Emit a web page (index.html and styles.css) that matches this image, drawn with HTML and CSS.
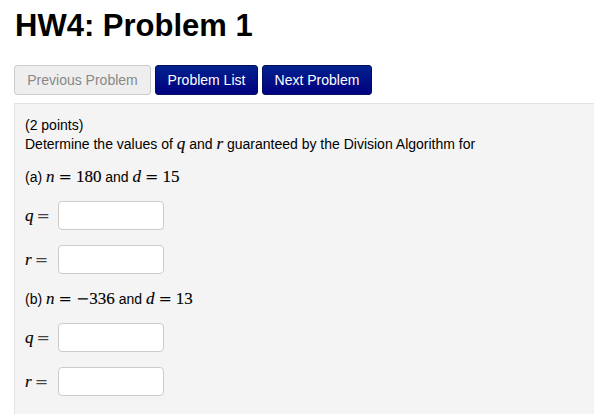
FILE: index.html
```html
<!DOCTYPE html>
<html lang="en">
<head>
    <meta charset="utf-8" />
    <title>HW4: Problem 1</title>
    <link rel="stylesheet" href="styles.css">
</head>
<body>
    <h1 class="page-title">HW4: Problem 1</h1>
    <div class="nav-btns">
        <a href="javascript:void(0)" class="btn btn-disabled">Previous Problem</a>
        <a href="javascript:void(0)" class="btn btn-primary">Problem List</a>
        <a href="javascript:void(0)" class="btn btn-primary">Next Problem</a>
    </div>
    <div class="problem">
        <p class="points">(2 points)</p>
        <p class="intro">Determine the values of <i class="m">q</i> and <i class="m">r</i> guaranteed by the Division Algorithm for</p>
        <p class="part">(a) <i class="m">n</i><span class="op">=</span><span class="num">180</span> and <i class="m">d</i><span class="op">=</span><span class="num">15</span></p>
        <div class="answer"><label><i class="m">q</i><span class="op">=</span></label><input type="text"></div>
        <div class="answer"><label><i class="m">r</i><span class="op">=</span></label><input type="text"></div>
        <p class="part">(b) <i class="m">n</i><span class="op">=</span><span class="neg">&minus;</span><span class="num">336</span> and <i class="m">d</i><span class="op">=</span><span class="num">13</span></p>
        <div class="answer"><label><i class="m">q</i><span class="op">=</span></label><input type="text"></div>
        <div class="answer"><label><i class="m">r</i><span class="op">=</span></label><input type="text"></div>
    </div>
</body>
</html>
```

FILE: styles.css
```css
body {
    margin: 0;
    padding: 0 0 0 14px;
    font-family: "Liberation Sans", Arial, sans-serif;
    color: #000;
    background-color: #fff;
    overflow: hidden;
}
a {
    text-decoration: none;
}
.page-title {
    margin: 0;
    padding-top: 8px;
    height: 57px;
    font-size: 31px;
    line-height: 36px;
    font-weight: bold;
    padding-left: 1px;
}
.nav-btns {
    display: flex;
    gap: 4px;
    height: 30px;
}
.btn {
    display: block;
    box-sizing: border-box;
    height: 30px;
    line-height: 28px;
    font-size: 14px;
    text-align: center;
    border: 1px solid #ccc;
    border-radius: 3px;
}
.btn-disabled {
    width: 137px;
    color: #888;
    background-color: #eee;
}
.btn-primary {
    color: #fff;
    border-color: #00105e;
    background: linear-gradient(#03228e, #000080);
}
.nav-btns .btn-primary:nth-child(2) {
    width: 103px;
}
.nav-btns .btn-primary:nth-child(3) {
    width: 110px;
}
.problem {
    box-sizing: border-box;
    margin-top: 8px;
    padding: 12px 10px 0;
    height: 312px;
    background-color: #f4f4f4;
    border-top: 1px solid #e3e3e3;
    border-left: 1px solid #e3e3e3;
    font-size: 14px;
}
.problem p {
    margin: 0;
}
.points {
    line-height: 18px;
}
.intro {
    line-height: 20px;
}
.problem .part {
    margin-top: 13px;
    line-height: 20px;
}
.problem .answer + .part {
    margin-top: 15px;
}
/* math */
.m,
.num {
    font-family: "Liberation Serif", "Times New Roman", serif;
    font-size: 17px;
    -webkit-text-stroke: 0.15px #000;
}
.m {
    font-style: italic;
}
.op,
.neg {
    font-family: "DejaVu Serif", serif;
    font-size: 16px;
}
.op {
    padding: 0 4px;
}
.answer {
    display: flex;
    align-items: center;
    margin-top: 15px;
    height: 29px;
}
.part + .answer {
    margin-top: 14px;
}
.answer label {
    width: 33px;
}
.answer label .op {
    padding: 0 0 0 3px;
    color: #444;
}
.answer input {
    box-sizing: border-box;
    width: 106px;
    height: 29px;
    border: 1px solid #ccc;
    border-radius: 4px;
    background-color: #fff;
}
```
